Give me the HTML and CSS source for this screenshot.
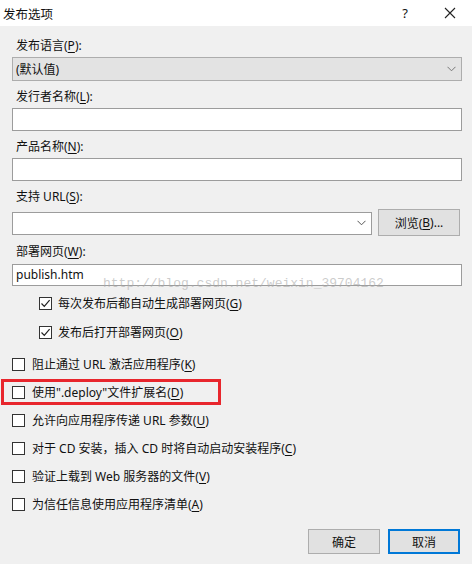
FILE: index.html
```html
<!DOCTYPE html>
<html>
<head>
<meta charset="utf-8">
<link rel="stylesheet" href="styles.css">
</head>
<body>
<div class="window">
  <div class="titlebar">
    <span class="title">发布选项</span>
    <span class="help">?</span>
    <span class="close">
      <svg width="12" height="12" viewBox="0 0 12 12"><path d="M1 1 L11 11 M11 1 L1 11" stroke="#222" stroke-width="1.1" fill="none"/></svg>
    </span>
  </div>
  <div class="dialog">
    <div class="label first">发布语言(<u>P</u>):</div>
    <div class="combo gray">
      <span class="combo-text">(默认值)</span>
      <svg class="chev" width="9" height="6" viewBox="0 0 9 6"><path d="M0.5 0.8 L4.5 4.8 L8.5 0.8" stroke="#777" stroke-width="1" fill="none"/></svg>
    </div>

    <div class="label">发行者名称(<u>L</u>):</div>
    <div class="input"></div>

    <div class="label">产品名称(<u>N</u>):</div>
    <div class="input"></div>

    <div class="label">支持 URL(<u>S</u>):</div>
    <div class="url-row">
      <div class="combo white">
        <span class="combo-text"></span>
        <svg class="chev" width="9" height="6" viewBox="0 0 9 6"><path d="M0.5 0.8 L4.5 4.8 L8.5 0.8" stroke="#555" stroke-width="1" fill="none"/></svg>
      </div>
      <div class="button browse">浏览(<u>B</u>)...</div>
    </div>

    <div class="label">部署网页(<u>W</u>):</div>
    <div class="input page">publish.htm</div>

    <div class="checks-sub">
      <div class="watermark">http://blog.csdn.net/weixin_39704162</div>
      <div class="check-row">
        <span class="box"><svg width="11" height="11" viewBox="0 0 11 11"><path d="M1.5 5.5 L4.3 8.3 L9.6 2.2" stroke="#222" stroke-width="1.2" fill="none"/></svg></span>
        <span>每次发布后都自动生成部署网页(<u>G</u>)</span>
      </div>
      <div class="check-row">
        <span class="box"><svg width="11" height="11" viewBox="0 0 11 11"><path d="M1.5 5.5 L4.3 8.3 L9.6 2.2" stroke="#222" stroke-width="1.2" fill="none"/></svg></span>
        <span>发布后打开部署网页(<u>O</u>)</span>
      </div>
    </div>

    <div class="checks">
      <div class="check-row"><span class="box"></span><span>阻止通过 URL 激活应用程序(<u>K</u>)</span></div>
      <div class="check-row marked"><span class="box"></span><span>使用".deploy"文件扩展名(<u>D</u>)</span></div>
      <div class="check-row"><span class="box"></span><span>允许向应用程序传递 URL 参数(<u>U</u>)</span></div>
      <div class="check-row"><span class="box"></span><span>对于 CD 安装，插入 CD 时将自动启动安装程序(<u>C</u>)</span></div>
      <div class="check-row"><span class="box"></span><span>验证上载到 Web 服务器的文件(<u>V</u>)</span></div>
      <div class="check-row"><span class="box"></span><span>为信任信息使用应用程序清单(<u>A</u>)</span></div>
    </div>

    <div class="buttons">
      <div class="button">确定</div>
      <div class="button default">取消</div>
    </div>
  </div>
</div>
</body>
</html>
```

FILE: styles.css
```css
html, body {
  margin: 0;
  padding: 0;
  background: #ffffff;
}
body {
  font-family: "Noto Sans", "Noto Sans CJK SC", sans-serif;
  font-size: 12px;
  color: #111;
}
u {
  text-decoration: underline;
  text-underline-offset: 2px;
}
.window {
  width: 474px;
  height: 567px;
  display: flex;
  flex-direction: column;
}
.titlebar {
  height: 26px;
  display: flex;
  align-items: center;
  background: #ffffff;
}
.title {
  padding-left: 3px;
  font-size: 12.5px;
  flex: 1;
}
.help {
  width: 20px;
  font-size: 13px;
  margin-right: 29px;
  text-align: center;
}
.close {
  width: 12px;
  display: flex;
  margin-right: 18px;
}
.dialog {
  position: relative;
  width: 450px;
  height: 538px;
  background: #f0f0f0;
  padding: 0 10px 0 12px;
  display: flex;
  flex-direction: column;
}
.label {
  height: 20px;
  line-height: 20px;
  margin-top: 6px;
  padding-left: 4px;
}
.label.first {
  margin-top: 10px;
}
.combo {
  height: 22px;
  border: 1px solid #adadad;
  margin-top: 1px;
  display: flex;
  align-items: center;
  padding-left: 3px;
}
.combo.gray {
  background: #e3e3e3;
}
.combo.white {
  background: #ffffff;
  flex: 1;
  height: 21px;
  border-color: #9c9c9c;
}
.combo-text {
  flex: 1;
}
.chev {
  margin-right: 5px;
}
.input {
  height: 21px;
  border: 1px solid #9c9c9c;
  background: #ffffff;
  margin-top: 1px;
  line-height: 21px;
  padding-left: 3px;
}
.input.page {
  height: 20px;
  line-height: 20px;
  margin-top: 2px;
}
.url-row {
  display: flex;
  align-items: center;
  margin-top: 2px;
  height: 27px;
  gap: 6px;
}
.button {
  width: 70px;
  height: 23px;
  border: 1px solid #adadad;
  background: #e1e1e1;
  display: flex;
  align-items: center;
  justify-content: center;
}
.button.browse {
  width: 80px;
  height: 25px;
  margin-right: 2px;
}
.button.default {
  border: 2px solid #0078d7;
  width: 68px;
  height: 21px;
}
.checks-sub {
  position: relative;
  display: flex;
  flex-direction: column;
  gap: 9px;
  margin-top: 7px;
  padding-left: 27px;
}
.checks {
  display: flex;
  flex-direction: column;
  gap: 8px;
  margin-top: 12px;
}
.check-row {
  height: 20px;
  display: flex;
  align-items: center;
  gap: 7px;
  position: relative;
}
.checks-sub .check-row {
  gap: 6px;
}
.box {
  width: 11px;
  height: 11px;
  border: 1px solid #333;
  background: #ffffff;
  display: flex;
  align-items: center;
  justify-content: center;
  flex: none;
}
.check-row.marked::after {
  content: "";
  position: absolute;
  left: -11px;
  top: -3px;
  width: 214px;
  height: 20px;
  border: 3px solid #e8262d;
}
.buttons {
  display: flex;
  justify-content: flex-end;
  gap: 8px;
  margin-top: 15px;
  margin-right: 2px;
}
.watermark {
  position: absolute;
  left: 91px;
  top: -17px;
  font-family: "Liberation Mono", monospace;
  font-size: 13px;
  line-height: 15px;
  color: rgba(170, 170, 170, 0.6);
  white-space: nowrap;
  pointer-events: none;
}
```
